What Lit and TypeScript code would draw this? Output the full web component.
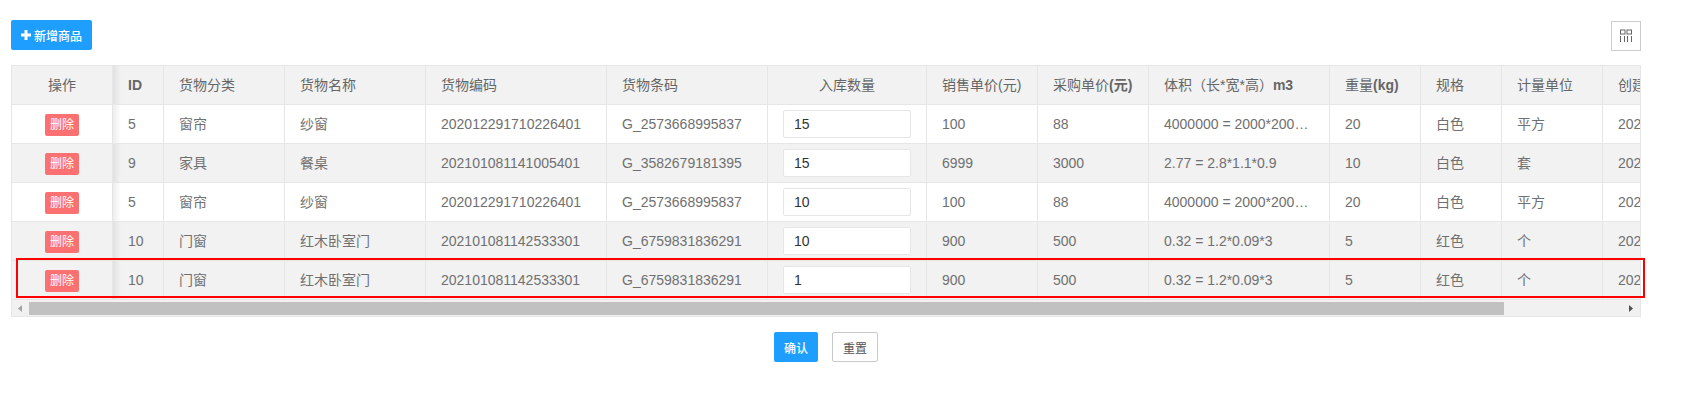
import { LitElement, html, css, svg } from "lit";
import { customElement } from "lit/decorators.js";

interface Row { id: string; cat: string; name: string; code: string; bar: string; qty: string; sale: string; buy: string; vol: string; weight: string; spec: string; unit: string; created: string; }

const WIDTHS = [101, 51, 121, 141, 181, 161, 159, 111, 111, 181, 91, 81, 101, 180];

const sand: Row = { id: "5", cat: "窗帘", name: "纱窗", code: "202012291710226401", bar: "G_2573668995837", qty: "15", sale: "100", buy: "88", vol: "4000000 = 2000*2000*1", weight: "20", spec: "白色", unit: "平方", created: "2021-01-08 11:40:12" };
const door: Row = { id: "10", cat: "门窗", name: "红木卧室门", code: "202101081142533301", bar: "G_6759831836291", qty: "10", sale: "900", buy: "500", vol: "0.32 = 1.2*0.09*3", weight: "5", spec: "红色", unit: "个", created: "2021-01-08 11:42:53" };

const ROWS: Row[] = [
  sand,
  { id: "9", cat: "家具", name: "餐桌", code: "202101081141005401", bar: "G_3582679181395", qty: "15", sale: "6999", buy: "3000", vol: "2.77 = 2.8*1.1*0.9", weight: "10", spec: "白色", unit: "套", created: "2021-01-08 11:41:00" },
  { ...sand, qty: "10" },
  door,
  { ...door, qty: "1" },
];

@customElement("app-root")
export class AppRoot extends LitElement {
  static styles = css`
    :host { display: block; font-family: "Liberation Sans", "Noto Sans CJK SC", sans-serif; font-size: 14px; color: #707070; }
    .page { position: relative; width: 1630px; margin-left: 11px; padding-top: 20px; padding-bottom: 40px; }
    .toolbar { display: flex; justify-content: space-between; align-items: flex-start; height: 45px; }
    .btn { display: inline-flex; align-items: center; justify-content: center; box-sizing: border-box; height: 30px; border-radius: 2px; font-size: 12px; white-space: nowrap; font-family: inherit; }
    .primary { background: #1e9fff; color: #fff; font-weight: 500; border: none; }
    .add { width: 81px; gap: 3px; }
    .cols { width: 30px; height: 30px; box-sizing: border-box; margin-top: 1px; border: 1px solid #ccc; display: flex; align-items: center; justify-content: center; }
    .table { border: 1px solid #e6e6e6; overflow: hidden; background: #fff; }
    table { border-collapse: separate; border-spacing: 0; table-layout: fixed; width: 1771px; }
    th, td { box-sizing: border-box; height: 39px; padding: 0 15px; border-right: 1px solid #e6e6e6; border-bottom: 1px solid #e6e6e6; text-align: left; font-weight: 400; white-space: nowrap; overflow: hidden; text-overflow: ellipsis; line-height: 20px; }
    th { background-color: #f2f2f2; color: #666; }
    th .b { font-weight: 700; }
    .c { text-align: center; }
    td { background-color: #fff; }
    tr.alt td { background-color: #f2f2f2; }
    th:nth-child(2), td:nth-child(2) { background-image: linear-gradient(90deg, rgba(0, 0, 0, 0.07), rgba(0, 0, 0, 0) 8px); }
    .fix { padding: 0; text-align: center; }
    td.fix { padding-top: 2px; }
    .del { display: inline-flex; align-items: center; justify-content: center; width: 34px; height: 22px; border-radius: 2px; background: #fb7070; color: #fff; font-size: 12px; vertical-align: middle; }
    .qty { display: block; box-sizing: border-box; width: 128px; height: 28px; padding: 0 10px; border: 1px solid #e6e6e6; border-radius: 2px; background: #fff; color: #333; font-size: 14px; font-family: inherit; outline: none; }
    .scroll { display: flex; align-items: center; height: 16px; background: #f1f1f1; }
    .arrow { flex: none; width: 17px; display: flex; align-items: center; justify-content: center; }
    .thumb { flex: none; width: 1475px; height: 13px; background: #c1c1c1; margin-top: 1px; }
    .spacer { flex: 1; }
    .actions { display: flex; justify-content: center; gap: 14px; margin-top: 15px; }
    .ok { width: 44px; }
    .reset { width: 46px; background: #fff; border: 1px solid #c9c9c9; color: #555; }
    .mark { position: absolute; left: 5px; top: 258px; width: 1629px; height: 40px; box-sizing: border-box; border: 2px solid #f00; pointer-events: none; z-index: 3; }
  `;

  private colsIcon() {
    return html`<svg width="14" height="14" viewBox="0 0 14 14" fill="none" stroke="#666" stroke-width="1">
      ${svg`<rect x="1.5" y="1" width="4.5" height="4" /><rect x="8" y="1" width="4.5" height="4" />
      <path d="M1.500 7v6M5.500 7v6M8.500 7v6M12.500 7v6" />`}
    </svg>`;
  }

  private head() {
    return html`<tr>
      <th class="fix">操作</th>
      <th><span class="b">ID</span></th>
      <th>货物分类</th>
      <th>货物名称</th>
      <th>货物编码</th>
      <th>货物条码</th>
      <th class="c">入库数量</th>
      <th>销售单价(元)</th>
      <th>采购单价<span class="b">(元)</span></th>
      <th>体积（长*宽*高）<span class="b">m3</span></th>
      <th>重量<span class="b">(kg)</span></th>
      <th>规格</th>
      <th>计量单位</th>
      <th>创建时间</th>
    </tr>`;
  }

  private row(r: Row, i: number) {
    const alt = i === 1 || i === 3 || i === 4;
    return html`<tr class=${alt ? "alt" : ""}>
      <td class="fix"><span class="del">删除</span></td>
      <td>${r.id}</td>
      <td>${r.cat}</td>
      <td>${r.name}</td>
      <td>${r.code}</td>
      <td>${r.bar}</td>
      <td><input class="qty" .value=${r.qty} /></td>
      <td>${r.sale}</td>
      <td>${r.buy}</td>
      <td>${r.vol}</td>
      <td>${r.weight}</td>
      <td>${r.spec}</td>
      <td>${r.unit}</td>
      <td>${r.created}</td>
    </tr>`;
  }

  render() {
    return html`<div class="page">
      <div class="toolbar">
        <button class="btn primary add">
          <svg width="10" height="10" viewBox="0 0 10 10" fill="#fff"><path d="M3.500 0h3v3.500H10v3H6.500V10h-3V6.500H0v-3h3.500z" /></svg>
          <span>新增商品</span>
        </button>
        <div class="cols">${this.colsIcon()}</div>
      </div>
      <div class="table">
        <table>
          <colgroup>${WIDTHS.map((w) => html`<col style="width:${w}px" />`)}</colgroup>
          <thead>${this.head()}</thead>
          <tbody>${ROWS.map((r, i) => this.row(r, i))}</tbody>
        </table>
        <div class="scroll">
          <div class="arrow"><svg width="5" height="7" viewBox="0 0 5 7" fill="#a3a3a3"><path d="M4 0v7L0 3.500z" /></svg></div>
          <div class="thumb"></div>
          <div class="spacer"></div>
          <div class="arrow"><svg width="5" height="7" viewBox="0 0 5 7" fill="#505050"><path d="M0 0v7l4-3.500z" /></svg></div>
        </div>
      </div>
      <div class="actions">
        <button class="btn primary ok">确认</button>
        <button class="btn reset">重置</button>
      </div>
      <div class="mark"></div>
    </div>`;
  }
}
